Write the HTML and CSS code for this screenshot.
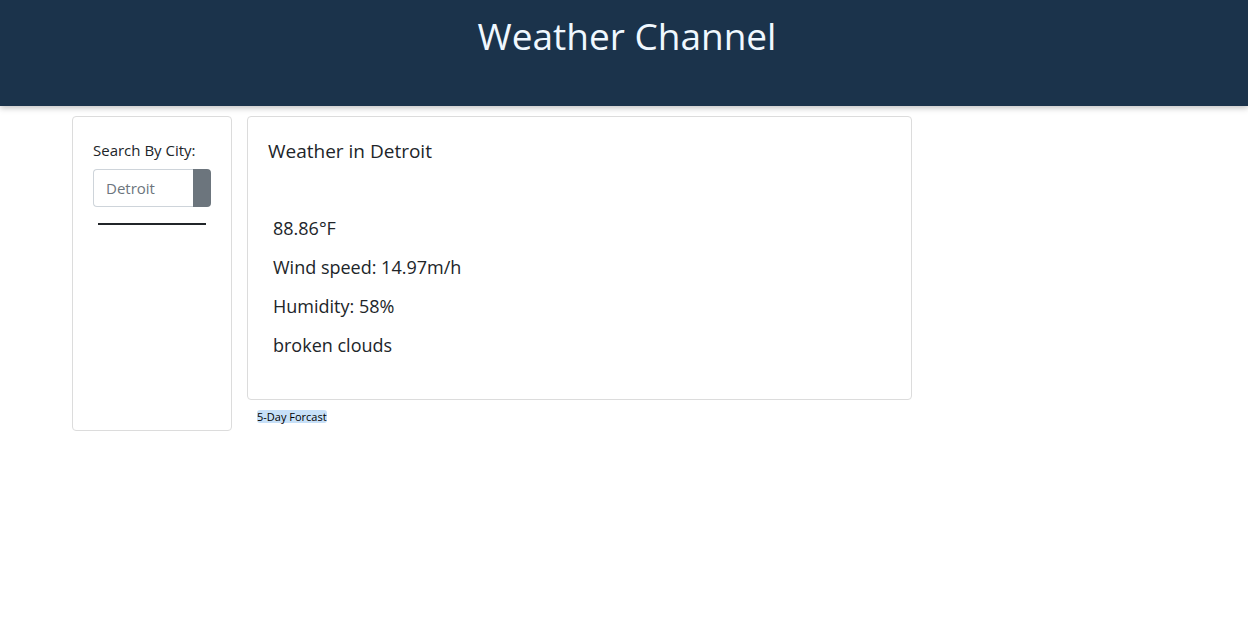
FILE: index.html
```html
<!DOCTYPE html>
<html lang="en">
<head>
<meta charset="utf-8">
<title>Weather Channel</title>
<link rel="stylesheet" href="styles.css">
</head>
<body>
<header class="topbar">
  <h1 class="title">Weather Channel</h1>
</header>
<main class="content">
  <aside class="card search-card">
    <label class="search-label" for="city">Search By City:</label>
    <div class="input-group">
      <input id="city" class="city-input" type="text" placeholder="Detroit">
      <button class="search-btn" type="button"></button>
    </div>
    <hr class="divider">
  </aside>
  <section class="main-col">
    <div class="card weather-card">
      <h2 class="weather-title">Weather in Detroit</h2>
      <p class="stat">88.86°F</p>
      <p class="stat">Wind speed: 14.97m/h</p>
      <p class="stat">Humidity: 58%</p>
      <p class="stat">broken clouds</p>
    </div>
    <div class="forecast"><span class="forecast-label">5-Day Forcast</span></div>
  </section>
</main>
</body>
</html>
```
FILE: styles.css
```css
* { box-sizing: border-box; }
html, body { margin: 0; padding: 0; }
body {
  font-family: "Open Sans", "Noto Sans", "Liberation Sans", sans-serif;
  color: #212529;
  background: #fff;
}
.topbar {
  background: #1b334b;
  height: 106px;
  box-shadow: 0 2px 6px rgba(0,0,0,0.25);
  text-align: center;
  padding: 12px 0 0 6px;
}
.title {
  margin: 0;
  font-weight: 400;
  font-size: 37px;
  line-height: 48px;
  color: #f0f8ff;
}
.content {
  display: flex;
  align-items: flex-start;
  gap: 15px;
  padding: 10px 0 0 72px;
}
.card {
  border: 1px solid #dcdcdc;
  border-radius: 4px;
  background: #fff;
}
.search-card {
  width: 160px;
  height: 315px;
  padding: 23px 20px 0 20px;
}
.search-label {
  display: block;
  font-size: 15px;
  line-height: 20px;
  margin-bottom: 9px;
}
.input-group {
  display: flex;
  width: 118px;
  height: 38px;
}
.city-input {
  flex: 1;
  min-width: 0;
  height: 38px;
  border: 1px solid #ced4da;
  border-right: none;
  border-radius: 4px 0 0 4px;
  padding: 0 12px;
  font-family: inherit;
  font-size: 15px;
  color: #495057;
}
.city-input::placeholder { color: #6c757d; opacity: 1; }
.search-btn {
  width: 18px;
  height: 38px;
  border: none;
  background: #6c757d;
  border-radius: 0 4px 4px 0;
  padding: 0;
}
.divider {
  width: 108px;
  margin: 16px 0 0 5px;
  border: none;
  border-top: 2px solid #212529;
}
.main-col {
  display: flex;
  flex-direction: column;
}
.weather-card {
  width: 665px;
  height: 284px;
  padding: 22px 20px 0 20px;
}
.weather-title {
  margin: 0 0 53px 0;
  font-size: 19px;
  font-weight: 400;
  line-height: 24px;
}
.stat {
  margin: 0 0 15px 5px;
  font-size: 18px;
  line-height: 24px;
}
.forecast {
  padding: 4px 0 0 10px;
}
.forecast-label {
  font-size: 11px;
  line-height: 13px;
  background: #c7e0f8;
  border-radius: 3px;
  color: #000;
  display: inline-block;
}
```
